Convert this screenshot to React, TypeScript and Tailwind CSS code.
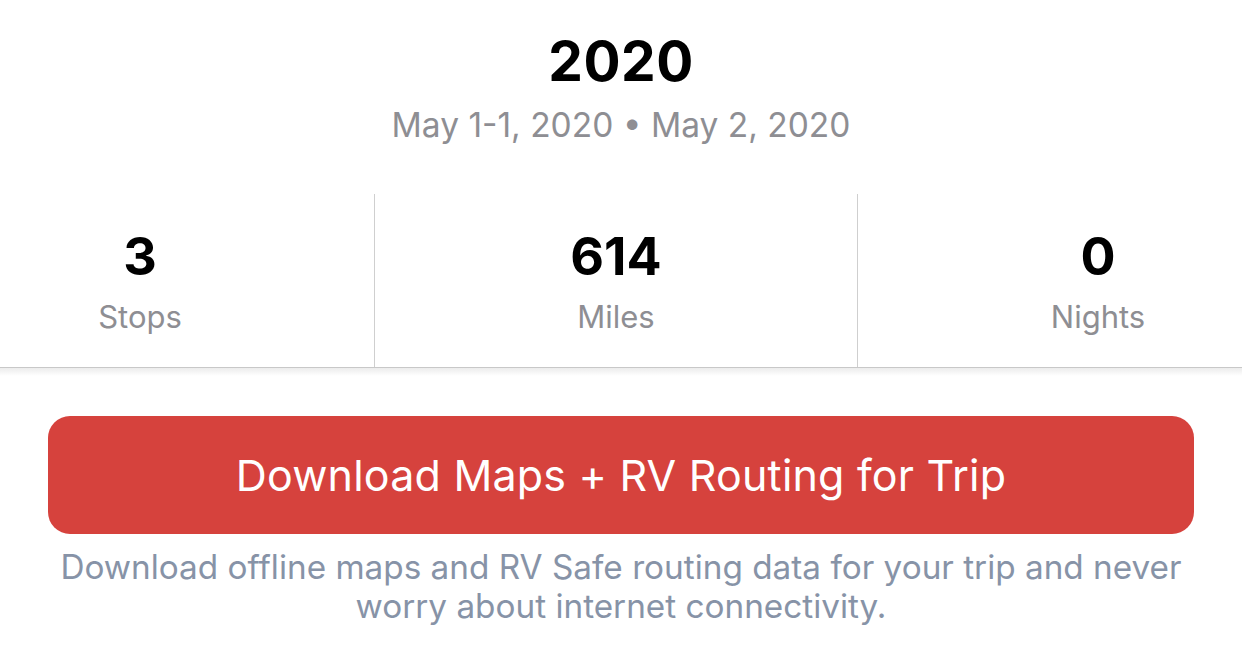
import React from 'react';

const stats = [
  { value: '3', label: 'Stops', cls: 'w-[374px] pr-[94px]' },
  { value: '614', label: 'Miles', cls: 'w-[483px] border-l border-[#cfcfcf]' },
  { value: '0', label: 'Nights', cls: 'flex-1 pl-[96px] border-l border-[#cfcfcf]' },
];

const App: React.FC = () => {
  return (
    <div className="w-[1242px] h-[660px] bg-white overflow-hidden font-['Inter',sans-serif]">
      <div className="flex flex-col items-center pt-[26px]">
        <h1 className="text-[55px] leading-[70px] font-bold text-black tracking-[0.5px]">2020</h1>
        <p className="mt-[9px] text-[33.5px] leading-[40px] text-[#8e8e93]">May 1-1, 2020 • May 2, 2020</p>
      </div>

      <div className="mt-[49px] flex border-b border-[#c8c8c8]">
        {stats.map((s) => (
          <div key={s.label} className={`h-[173px] flex flex-col items-center pt-[32px] ${s.cls}`}>
            <span className="text-[52px] leading-[62px] font-bold text-black">{s.value}</span>
            <span className="mt-[9px] text-[31px] leading-[40px] text-[#8e8e93]">{s.label}</span>
          </div>
        ))}
      </div>
      <div className="h-[8px] bg-gradient-to-b from-[#ececec] to-white" />

      <div className="px-[48px] pt-[40px]">
        <button className="w-full h-[118px] rounded-[22px] bg-[#d6423d] text-white text-[43px] font-normal tracking-[0.2px]">
          Download Maps + RV Routing for Trip
        </button>
        <p className="mt-[14px] text-center text-[33.3px] leading-[39px] text-[#8793a7]">
          Download offline maps and RV Safe routing data for your trip and never
          <br />
          worry about internet connectivity.
        </p>
      </div>
    </div>
  );
};

export default App;
